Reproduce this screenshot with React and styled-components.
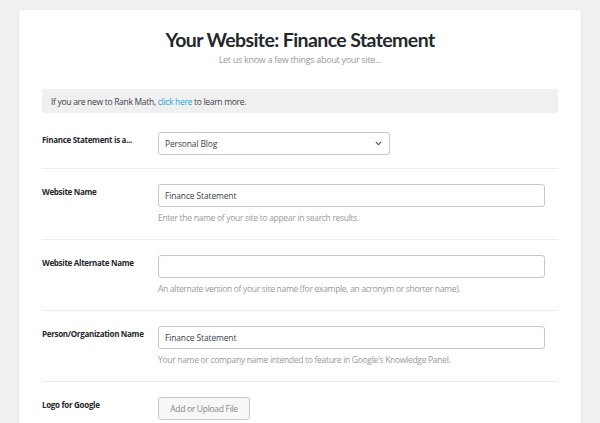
import React from "react";
import styled, { createGlobalStyle } from "styled-components";

const Global = createGlobalStyle`
  html, body { margin: 0; padding: 0; background: #f0f0f1; overflow: hidden; }
  body { font-family: "Open Sans", "Noto Sans", sans-serif; color: #23282d; }
  * { box-sizing: border-box; }
`;

const Page = styled.div`
  padding: 10px 19px 0 19px;
  height: 423px;
`;

const Card = styled.div`
  width: 562px;
  background: #fff;
  border-radius: 3px;
  box-shadow: 0 1px 3px rgba(0, 0, 0, 0.08);
  padding: 17px 23px 40px;
`;

const Header = styled.header`
  display: flex;
  flex-direction: column;
  align-items: center;
`;

const Title = styled.h1`
  margin: 0;
  font-family: Lato, "Open Sans", sans-serif;
  font-size: 19.5px;
  line-height: 26px;
  font-weight: 700;
  letter-spacing: -0.6px;
  color: #23282d;
`;

const Subtitle = styled.p`
  margin: 0;
  font-size: 9px;
  line-height: 14px;
  letter-spacing: -0.3px;
  color: #999;
`;

const Notice = styled.div`
  margin-top: 22px;
  background: #f0f0f1;
  border-radius: 2px;
  height: 24px;
  display: flex;
  align-items: center;
  padding: 0 9px;
  font-size: 8.5px;
  letter-spacing: -0.3px;
  color: #3c434a;
`;

const Link = styled.a`
  color: #1fa3e6;
  text-decoration: none;
`;

const Row = styled.div`
  display: grid;
  grid-template-columns: 116px 1fr;
  padding: ${(p) => (p.$first ? "19px 0 13px" : "15px 0 15px")};
  border-bottom: ${(p) => (p.$last ? "none" : "1px solid #ececec")};
`;

const Label = styled.div`
  font-size: 8px;
  font-weight: 700;
  letter-spacing: -0.3px;
  color: #23282d;
  line-height: 12px;
  padding-top: 2px;
`;

const Field = styled.div`
  display: flex;
  flex-direction: column;
  align-items: flex-start;
`;

const Input = styled.div`
  width: ${(p) => p.$w || 387}px;
  height: 23px;
  border: 1px solid #c8c8c8;
  border-radius: 3px;
  background: #fff;
  display: flex;
  align-items: center;
  justify-content: space-between;
  padding: 0 7px 0 6px;
  font-size: 8.5px;
  letter-spacing: -0.15px;
  color: #3c434a;
`;

const Help = styled.p`
  margin: 5px 0 0;
  font-size: 8.5px;
  line-height: 12px;
  letter-spacing: -0.3px;
  color: #9a9a9a;
`;

const Button = styled.button`
  width: 92px;
  height: 23px;
  border: 1px solid #c8c8c8;
  border-radius: 3px;
  background: #f6f7f7;
  font-family: inherit;
  font-size: 8.5px;
  letter-spacing: -0.3px;
  color: #8a8a8a;
  padding: 0;
`;

const Chevron = () => (
  <svg width="7" height="5" viewBox="0 0 7 5" fill="none">
    <path d="M0.8 0.9 L3.5 3.6 L6.2 0.9" stroke="#50575e" strokeWidth="1.1" />
  </svg>
);

export default function App() {
  return (
    <>
      <Global />
      <Page>
        <Card>
          <Header>
            <Title>Your Website: Finance Statement</Title>
            <Subtitle>Let us know a few things about your site...</Subtitle>
          </Header>
          <Notice>
            <span>
              If you are new to Rank Math, <Link href="#">click here</Link> to learn more.
            </span>
          </Notice>
          <Row $first>
            <Label>Finance Statement is a...</Label>
            <Field>
              <Input $w={232}>
                <span>Personal Blog</span>
                <Chevron />
              </Input>
            </Field>
          </Row>
          <Row>
            <Label>Website Name</Label>
            <Field>
              <Input>Finance Statement</Input>
              <Help>Enter the name of your site to appear in search results.</Help>
            </Field>
          </Row>
          <Row>
            <Label>Website Alternate Name</Label>
            <Field>
              <Input />
              <Help>An alternate version of your site name (for example, an acronym or shorter name).</Help>
            </Field>
          </Row>
          <Row>
            <Label>Person/Organization Name</Label>
            <Field>
              <Input>Finance Statement</Input>
              <Help>Your name or company name intended to feature in Google's Knowledge Panel.</Help>
            </Field>
          </Row>
          <Row $last>
            <Label>Logo for Google</Label>
            <Field>
              <Button>Add or Upload File</Button>
            </Field>
          </Row>
        </Card>
      </Page>
    </>
  );
}
